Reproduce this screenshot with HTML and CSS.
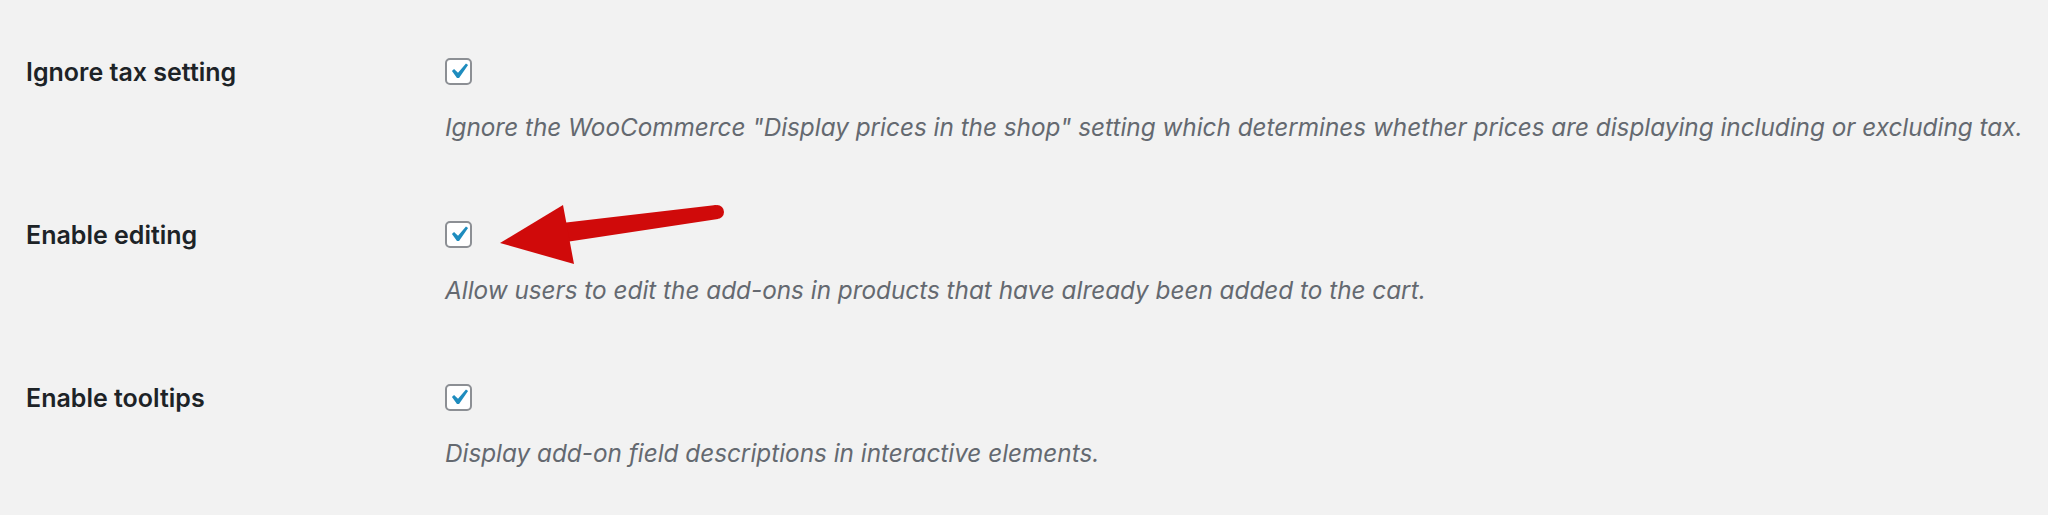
FILE: index.html
```html
<!DOCTYPE html>
<html lang="en">
	<head>
		<meta charset="utf-8">
		<title>Add-ons settings</title>
		<link rel="stylesheet" href="styles.css">
	</head>

	<body>
		<div id="settings">
			<div class="row">
				<div class="row-label">Ignore tax setting</div>
				<div class="row-field">
					<span class="checkbox">
						<svg viewBox="0 0 20 20"><path d="M14.83 4.89l1.34.94-5.81 8.38H9.02L5.78 9.67l1.34-1.25 2.57 2.4z"/></svg>
					</span>
					<p class="description">Ignore the WooCommerce "Display prices in the shop" setting which determines whether prices are displaying including or excluding tax.</p>
				</div>
			</div>
			<div class="row">
				<div class="row-label">Enable editing</div>
				<div class="row-field">
					<span class="checkbox">
						<svg viewBox="0 0 20 20"><path d="M14.83 4.89l1.34.94-5.81 8.38H9.02L5.78 9.67l1.34-1.25 2.57 2.4z"/></svg>
					</span>
					<p class="description">Allow users to edit the add-ons in products that have already been added to the cart.</p>
				</div>
			</div>
			<div class="row">
				<div class="row-label">Enable tooltips</div>
				<div class="row-field">
					<span class="checkbox">
						<svg viewBox="0 0 20 20"><path d="M14.83 4.89l1.34.94-5.81 8.38H9.02L5.78 9.67l1.34-1.25 2.57 2.4z"/></svg>
					</span>
					<p class="description">Display add-on field descriptions in interactive elements.</p>
				</div>
			</div>

			<!-- red pointer drawn over the "Enable editing" box -->
			<svg class="pointer" viewBox="0 0 2048 515">
				<polygon points="562,223 716,205 718,219 566,242"/>
				<circle cx="717" cy="212" r="7"/>
				<polygon points="500,243 563,205 574,264"/>
			</svg>
		</div>
	</body>
</html>
```

FILE: styles.css
```css
html, body {
	margin: 0;
	padding: 0;
}
body {
	background-color: #f2f2f2;
	width: 2048px;
	height: 515px;
	overflow: hidden;
}
#settings {
	padding: 58px 0 0 26px;
	display: flex;
	flex-direction: column;
	gap: 77px;
}
.row {
	display: grid;
	grid-template-columns: 419px 1fr;
}
.row-label {
	padding-top: 1px;
	font-family: Inter, "Liberation Sans", sans-serif;
	font-weight: 600;
	font-size: 25px;
	line-height: 27px;
	color: #1d2327;
}
.row-field {
	display: flex;
	flex-direction: column;
	align-items: flex-start;
	gap: 25px;
}
.checkbox {
	display: block;
	box-sizing: border-box;
	width: 27px;
	height: 27px;
	background-color: #fff;
	border: 2px solid #8c8f94;
	border-radius: 5px;
}
.checkbox svg {
	display: block;
	width: 31px;
	height: 31px;
	margin: -4px 0 0 -4px;
	fill: #1e8cbe;
}
.description {
	margin: 0;
	font-family: Inter, "Liberation Sans", sans-serif;
	font-style: italic;
	font-size: 24.3px;
	line-height: 34px;
	color: #646970;
}
.pointer {
	position: absolute;
	top: 0;
	left: 0;
	width: 2048px;
	height: 515px;
	fill: #d00a0a;
	pointer-events: none;
}
```
